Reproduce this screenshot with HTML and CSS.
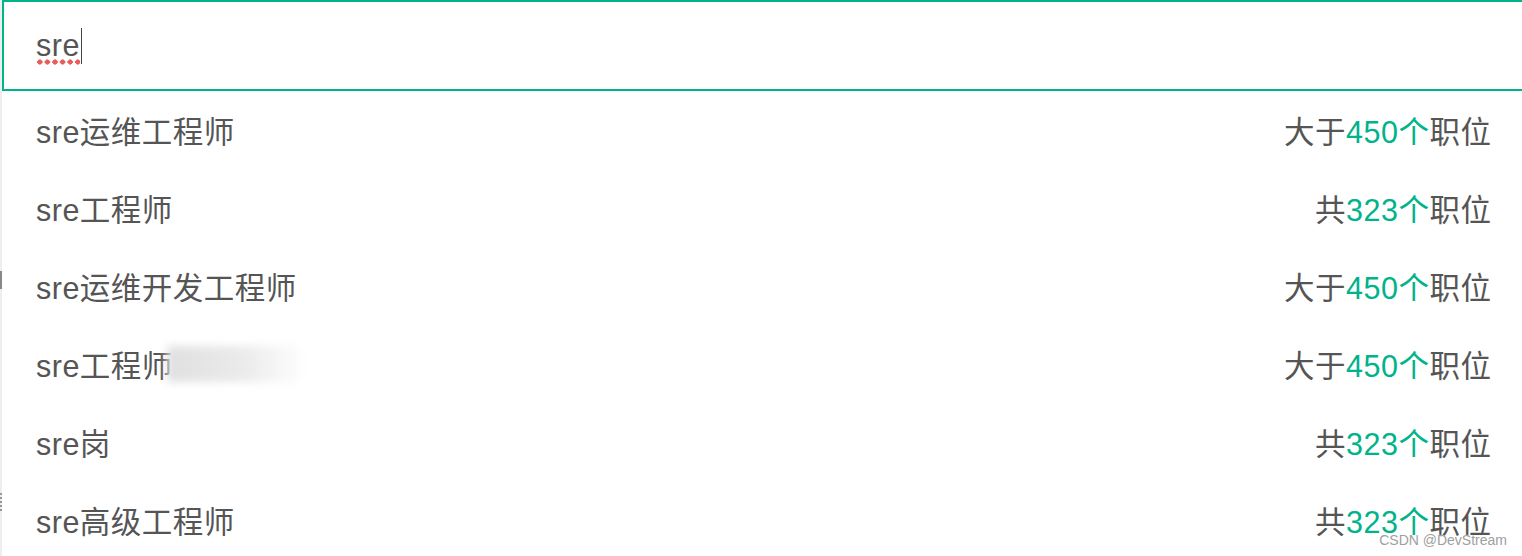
FILE: index.html
```html
<!DOCTYPE html>
<html lang="zh-CN">
<head>
<meta charset="utf-8">
<title>sre 搜索建议</title>
<link rel="stylesheet" href="styles.css">
</head>
<body>
<div class="search">
  <div class="input">
    <span class="typed">sre</span><span class="caret"></span>
  </div>
  <ul class="suggest">
    <li><span class="kw">sre运维工程师</span><span class="count">大于<em>450个</em>职位</span></li>
    <li><span class="kw">sre工程师</span><span class="count">共<em>323个</em>职位</span></li>
    <li class="mark"><span class="kw">sre运维开发工程师</span><span class="count">大于<em>450个</em>职位</span></li>
    <li><span class="kw">sre工程师<span class="blur"></span></span><span class="count">大于<em>450个</em>职位</span></li>
    <li><span class="kw">sre岗</span><span class="count">共<em>323个</em>职位</span></li>
    <li class="mark2"><span class="kw">sre高级工程师</span><span class="count">共<em>323个</em>职位</span></li>
  </ul>
  <div class="watermark">CSDN @DevStream</div>
</div>
</body>
</html>
```

FILE: styles.css
```css
html, body {
  margin: 0;
  padding: 0;
  background: #fff;
  overflow: hidden;
}
body {
  font-family: "Liberation Sans", "Noto Sans CJK SC", sans-serif;
  color: #555;
}
.search {
  position: relative;
  width: 1522px;
  height: 556px;
  border-left: 2px solid #eeeeee;
  box-sizing: border-box;
}
.input {
  box-sizing: border-box;
  width: 1530px;
  height: 91px;
  border: 2px solid #00b38a;
  display: flex;
  align-items: center;
  padding-left: 32px;
  font-size: 30.5px;
  letter-spacing: 0.5px;
  color: #555;
}
.typed {
  position: relative;
  line-height: 36px;
  padding-bottom: 2px;
  background-image: radial-gradient(circle, #ea5b5b 2.4px, transparent 2.8px);
  background-size: 7.6px 6px;
  background-repeat: repeat-x;
  background-position: 0 100%;
}
.caret {
  display: inline-block;
  width: 0;
  height: 36px;
  border-left: 1.5px solid #444;
  margin-left: 1px;
}
.suggest {
  list-style: none;
  margin: 0;
  padding: 0 31px 0 34px;
}
.suggest li {
  height: 78px;
  display: flex;
  align-items: center;
  justify-content: space-between;
  font-size: 30.5px;
  letter-spacing: 0.5px;
}
.kw {
  position: relative;
  display: flex;
  align-items: center;
}
.count {
  margin-right: -0.5px;
}
.count em {
  font-style: normal;
  color: #00b38a;
}
.blur {
  display: inline-block;
  width: 140px;
  height: 36px;
  margin-left: -6px;
  background: linear-gradient(90deg, #e0e0e0 0%, #ebebeb 55%, rgba(245,245,245,0) 100%);
  filter: blur(4px);
}
.mark {
  position: relative;
}
.mark::before {
  content: "";
  position: absolute;
  left: -36px;
  top: 24px;
  width: 2px;
  height: 18px;
  background: #888;
}
.mark2 {
  position: relative;
}
.mark2::before {
  content: "";
  position: absolute;
  left: -36px;
  top: 12px;
  width: 2px;
  height: 20px;
  background: repeating-linear-gradient(180deg, #999 0 2px, transparent 2px 4px);
}
.watermark {
  position: absolute;
  right: 15px;
  bottom: 8px;
  font-family: "Liberation Sans", sans-serif;
  font-size: 14px;
  color: #a0a0a0;
  text-shadow: 0 0 1px #fff;
}
```
